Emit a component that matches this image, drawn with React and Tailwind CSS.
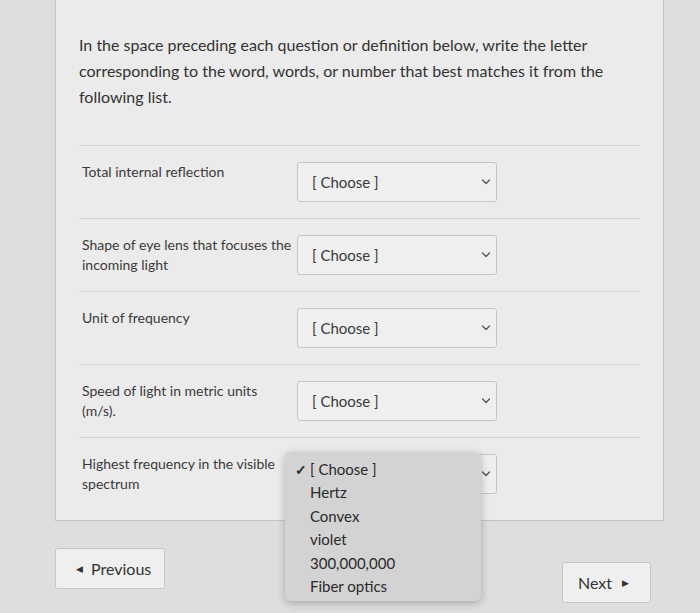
import React from "react";

function Chevron() {
  return (
    <svg width="10" height="7" viewBox="0 0 10 7" className="absolute right-[5px] top-1/2 -translate-y-1/2">
      <path d="M1.5 1.5 L5 5 L8.5 1.5" fill="none" stroke="#555" strokeWidth="1.3" strokeLinecap="round" strokeLinejoin="round" />
    </svg>
  );
}

function Select({ hidden }) {
  return (
    <div className="relative w-[200px] h-[40px] shrink-0 rounded-[3px] border border-[#c6c6c6] bg-[#efefef] flex items-center pl-[14px] text-[15px] text-[#3a3a3a]">
      {hidden ? null : "[ Choose ]"}
      <Chevron />
    </div>
  );
}

function Row({ label, last }) {
  return (
    <div className={"flex pl-[3px] pt-[16px] " + (last ? "pb-[26px]" : "pb-[16px] border-b border-[#d2d2d2]")}>
      <div className="w-[212px] mr-[3px] shrink-0 text-[14px] leading-[20px] text-[#3a3a3a]">{label}</div>
      <Select hidden={last} />
    </div>
  );
}

export default function App() {
  const items = ["Hertz", "Convex", "violet", "300,000,000", "Fiber optics"];
  return (
    <div className="relative w-[700px] h-[613px] overflow-hidden bg-[#dedede] font-['Lato','Noto_Sans',sans-serif]">
      <div className="ml-[55px] w-[609px] border-x border-b border-[#c4c4c4] bg-[#ebebeb] pt-[32px] px-[23px]">
        <p className="text-[16px] leading-[26px] text-[#333] pr-[10px]">
          In the space preceding each question or definition below, write the letter corresponding to the word, words, or number that best matches it from the following list.
        </p>
        <div className="mt-[35px] border-t border-[#d2d2d2]">
          <Row label="Total internal reflection" />
          <Row label="Shape of eye lens that focuses the incoming light" />
          <Row label="Unit of frequency" />
          <Row label="Speed of light in metric units (m/s)." />
          <Row label="Highest frequency in the visible spectrum" last />
        </div>
      </div>

      <div className="flex justify-between items-start ml-[55px] w-[596px] mt-[27px]">
        <div className="w-[110px] h-[41px] rounded-[3px] border border-[#c6c6c6] bg-[#efefef] flex items-center pl-[20px] gap-[8px] text-[16px] text-[#333]">
          <span className="text-[9px]">◀</span>
          <span>Previous</span>
        </div>
        <div className="mt-[14px] w-[89px] h-[41px] rounded-[3px] border border-[#c6c6c6] bg-[#efefef] flex items-center pl-[15px] gap-[10px] text-[16px] text-[#333]">
          <span>Next</span>
          <span className="text-[9px]">▶</span>
        </div>
      </div>

      <div className="absolute left-[285px] top-[452px] w-[196px] h-[149px] rounded-[6px] bg-[#d3d3d3] shadow-[0_2px_8px_rgba(0,0,0,0.25)] py-[6px] text-[15px] leading-[23.4px] text-[#2a2a2a]">
        <div className="flex">
          <span className="w-[25px] pl-[10px] text-[14px] font-bold">✓</span>
          <span>[ Choose ]</span>
        </div>
        {items.map((t) => (
          <div key={t} className="pl-[25px]">{t}</div>
        ))}
      </div>
    </div>
  );
}
